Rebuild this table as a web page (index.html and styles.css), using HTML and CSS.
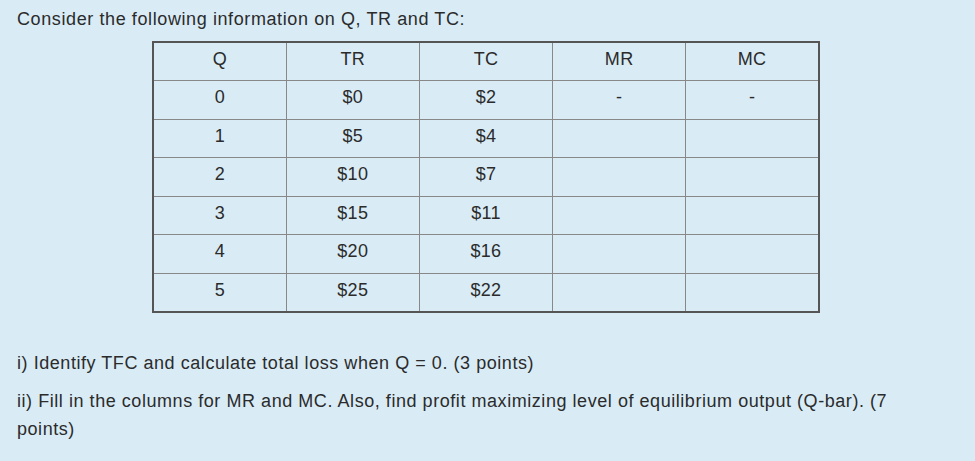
FILE: index.html
```html
<!DOCTYPE html>
<html>
<head>
<meta charset="utf-8">
<link rel="stylesheet" href="styles.css">
</head>
<body>
<div class="page">
  <p class="intro">Consider the following information on Q, TR and TC:</p>
  <table class="data">
    <tr><td>Q</td><td>TR</td><td>TC</td><td>MR</td><td>MC</td></tr>
    <tr><td>0</td><td>$0</td><td>$2</td><td>-</td><td>-</td></tr>
    <tr><td>1</td><td>$5</td><td>$4</td><td></td><td></td></tr>
    <tr><td>2</td><td>$10</td><td>$7</td><td></td><td></td></tr>
    <tr><td>3</td><td>$15</td><td>$11</td><td></td><td></td></tr>
    <tr><td>4</td><td>$20</td><td>$16</td><td></td><td></td></tr>
    <tr><td>5</td><td>$25</td><td>$22</td><td></td><td></td></tr>
  </table>
  <p class="q q1">i) Identify TFC and calculate total loss when Q = 0. (3 points)</p>
  <p class="q">ii) Fill in the columns for MR and MC. Also, find profit maximizing level of equilibrium output (Q-bar). (7 points)</p>
</div>
</body>
</html>
```
FILE: styles.css
```css
html, body {
  margin: 0;
  padding: 0;
  background: #d9ecf6;
}
body {
  font-family: "Liberation Sans", Arial, sans-serif;
  color: #2b2b2b;
  width: 975px;
  height: 461px;
  overflow: hidden;
}
.page {
  padding: 6px 18px 0 17px;
}
.intro {
  margin: 0;
  font-size: 18px;
  letter-spacing: 0.6px;
  line-height: 26px;
}
.data {
  margin: 9px 0 0 135px;
  border-collapse: collapse;
  border: 2px solid #555;
  table-layout: fixed;
  width: 668px;
}
.data td {
  height: 38.6px;
  padding: 0;
  border: 1px solid #888;
  text-align: center;
  vertical-align: top;
  padding-top: 6px;
  box-sizing: border-box;
  font-size: 18px;
  letter-spacing: 0.3px;
  line-height: 20px;
}
.q {
  margin: 0;
  font-size: 18px;
  letter-spacing: 0.55px;
  line-height: 28px;
  width: 885px;
}
.q1 {
  margin-top: 36px;
  margin-bottom: 10px;
}
```
